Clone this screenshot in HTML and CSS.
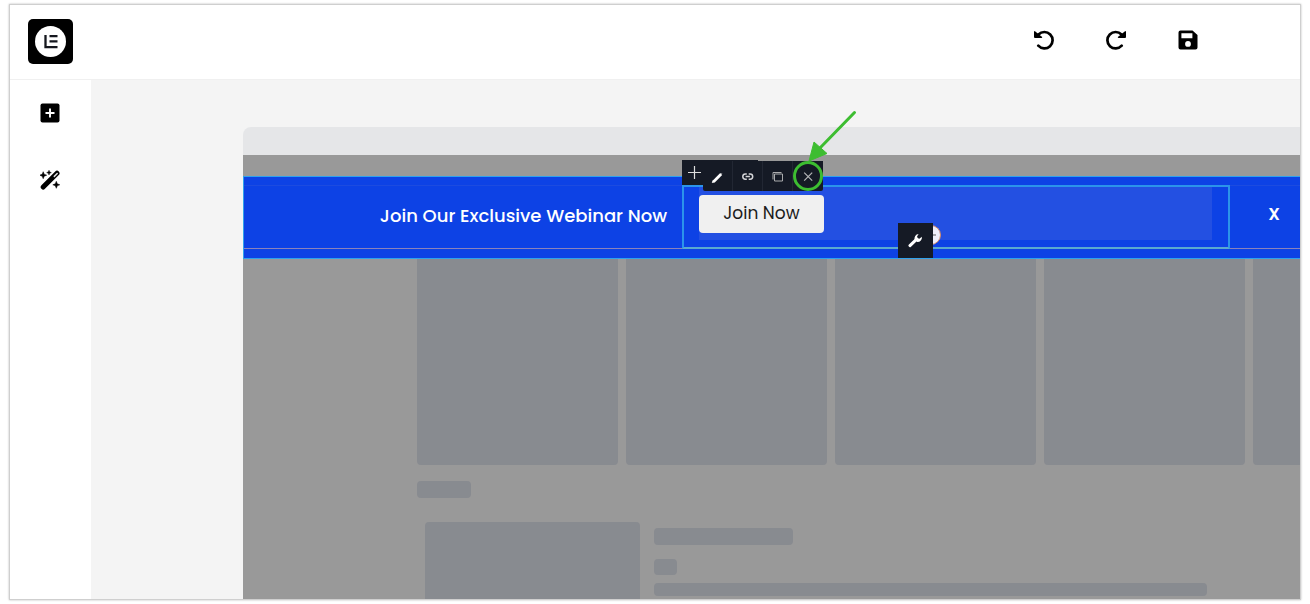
FILE: index.html
```html
<!DOCTYPE html>
<html lang="en">
<head>
<meta charset="utf-8">
<meta name="viewport" content="width=device-width, initial-scale=1">
<title>Webinar bar editor</title>
<link rel="stylesheet" href="styles.css">
</head>
<body>
<div class="app">
  <header class="topbar">
    <button class="logo" type="button" aria-label="Menu">
      <svg viewBox="0 0 45 45" width="45" height="45"><circle cx="22.5" cy="22.5" r="15.5" fill="#fff"/><path d="M17.500 16v12.200h12M21.500 17.200h8M21.500 22.300h8" fill="none" stroke="#15171e" stroke-width="2.300"/></svg>
    </button>
    <div class="actions">
      <button type="button" aria-label="Undo">
        <svg viewBox="0 0 20 20" width="20" height="20"><path d="M4.500 4.500A8.200 8.200 0 1 1 4.300 15.700" fill="none" stroke="#000" stroke-width="2.700" stroke-linecap="round"/><path d="M0 1.500Q.2 .6 1 1.200L8.200 7Q8.300 8 7.500 8H1Q0 8 0 7z"/></svg>
      </button>
      <button type="button" aria-label="Redo">
        <svg viewBox="0 0 20 20" width="20" height="20"><path d="M15.500 4.500A8.200 8.200 0 1 0 15.700 15.700" fill="none" stroke="#000" stroke-width="2.700" stroke-linecap="round"/><path d="M20 1.500Q19.800 .6 19 1.200L11.800 7Q11.700 8 12.500 8H19Q20 8 20 7z"/></svg>
      </button>
      <button type="button" aria-label="Save">
        <svg viewBox="0 0 20 20" width="20" height="20"><path fill-rule="evenodd" d="M3 .5h11.500L19.500 5v12.500a2 2 0 0 1-2 2H2.500a2 2 0 0 1-2-2V2.500a2 2 0 0 1 2-2zM3.400 3.200v5h11v-5zM10 11a2.900 2.900 0 1 0 0 5.800a2.900 2.900 0 0 0 0-5.800z"/></svg>
      </button>
    </div>
  </header>
  <div class="workspace">
    <nav class="sidebar" aria-label="Tools">
      <button type="button" aria-label="Add element">
        <svg viewBox="0 0 20 20" width="20" height="20"><rect x=".5" y=".5" width="19" height="19" rx="2"/><path d="M10 5.500v9M5.500 10h9" stroke="#fff" stroke-width="1.900"/></svg>
      </button>
      <button type="button" aria-label="Magic styling">
        <svg viewBox="0 0 20 20" width="20" height="20"><path d="M3.200 17L17 3.200" stroke="#000" stroke-width="5" stroke-linecap="round"/><path d="M14.300 6.400l2.900-2.900" stroke="#ddd" stroke-width="1.500" stroke-linecap="round"/><path d="M3.200 1.700l1 2.500 2.500 1-2.500 1-1 2.500-1-2.500-2.500-1 2.500-1zM9 .3l.7 1.600 1.600.7-1.600.7L9 4.900l-.7-1.600-1.600-.7 1.600-.7zM16.300 11.300l1 2.500 2.500 1-2.500 1-1 2.500-1-2.500-2.500-1 2.500-1z" stroke="#000" stroke-width=".5"/></svg>
      </button>
    </nav>
    <main class="canvas">
      <div class="browser-bar"></div>
      <div class="page">
        <section class="banner">
          <div class="banner-row">
            <h1 class="banner-title">Join Our Exclusive Webinar Now</h1>
            <div class="column">
              <div class="widget"><button class="cta" type="button">Join Now</button></div>
              <div class="column-tools"><button type="button" aria-label="Add column"><svg viewBox="0 0 25 25" width="25" height="25"><path d="M12.500 6v13M6 12.500h13" stroke="#ddd" stroke-width="1.200"/></svg></button></div>
              <div class="widget-tools">
                <button type="button" aria-label="Edit"><svg viewBox="0 0 30 30" width="30" height="30"><path d="M10.800 20.400l7.400-7.400" stroke="#fff" stroke-width="2.800"/><path d="M9.300 21.600l.8-2.400 1.800 1.700zM18.600 12.600l.6-.6" fill="#fff" stroke="#fff" stroke-width=".8"/></svg></button>
                <button type="button" aria-label="Link"><svg viewBox="0 0 30 30" width="30" height="30"><path d="M13.800 13h-1.400a2.500 2.500 0 0 0 0 5.200h1.400M15.700 13h1.400a2.500 2.500 0 0 1 0 5.200h-1.400M12.600 15.600h4.300" fill="none" stroke="#d5d5d8" stroke-width="1.500"/></svg></button>
                <button type="button" aria-label="Duplicate"><svg viewBox="0 0 30 30" width="30" height="30"><path d="M11.500 13h8v7h-8zM10 18.500v-7h8.500" fill="none" stroke="#aaabad"/></svg></button>
                <button type="button" aria-label="Delete"><svg viewBox="0 0 30 30" width="30" height="30"><path d="M11.200 11.600l8 8M19.200 11.600l-8 8" stroke="#b5b6b8" stroke-width="1.200"/></svg></button>
              </div>
              <button class="add-dot" type="button" aria-label="Add section"><svg viewBox="0 0 18 18" width="18" height="18"><path d="M5 9h9" stroke="#555"/></svg></button>
              <button class="settings" type="button" aria-label="Settings"><svg viewBox="0 0 36 36" width="35" height="35"><path d="M12.300 23.200l7-6.600" stroke="#fff" stroke-width="3.200" stroke-linecap="round"/><path d="M21.200 11.300a4.500 4.500 0 0 0-4 6l2.600 2.300a4.500 4.500 0 0 0 4.700-5.400l-2.500 2-1.900-.5-.5-1.900z" fill="#fff"/></svg></button>
              <svg class="pointer" viewBox="0 0 68 86" width="68" height="86" aria-hidden="true"><circle cx="16" cy="67" r="13.500" fill="none" stroke="#3dbd31" stroke-width="3"/><path d="M62.500 3.500L27 40" stroke="#3dbd31" stroke-width="3" stroke-linecap="round"/><path d="M17 52l5-19 13 11.500z" fill="#3dbd31" stroke="#3dbd31" stroke-linejoin="round"/></svg>
            </div>
            <button class="close" type="button">X</button>
          </div>
        </section>
        <div class="skeleton">
          <div class="tiles"><div class="block tile"></div><div class="block tile"></div><div class="block tile"></div><div class="block tile"></div><div class="block tile"></div></div>
          <div class="block label"></div>
          <div class="feature">
            <div class="block picture"></div>
            <div class="lines"><div class="block line-title"></div><div class="block line-tag"></div><div class="block line-body"></div></div>
          </div>
        </div>
      </div>
    </main>
  </div>
</div>
</body>
</html>
```
FILE: styles.css
```css
* { box-sizing: border-box; }

body {
  margin: 0;
  padding: 4px 9px;
  background: #fff;
  font-family: Poppins, Inter, "Open Sans", sans-serif;
}

button {
  display: block;
  margin: 0;
  padding: 0;
  border: 0;
  background: none;
  font: inherit;
  color: inherit;
}

svg { display: block; }

.app {
  display: flex;
  flex-direction: column;
  height: calc(100vh - 8px);
  border: 1px solid #cfcfcf;
  box-shadow: 0 0 2px #bbb;
  overflow: hidden;
}

.topbar {
  display: flex;
  flex: none;
  align-items: center;
  justify-content: space-between;
  height: 75px;
  padding: 0 102px 2px 18px;
  border-bottom: 1px solid #f0f0f0;
}

.logo {
  border-radius: 5px;
  background: #000;
}

.actions {
  display: flex;
  gap: 52px;
  margin-bottom: 2px;
}

.workspace {
  display: flex;
  flex: 1;
  min-height: 0;
}

.sidebar {
  display: flex;
  flex: none;
  flex-direction: column;
  align-items: center;
  gap: 47px;
  width: 81px;
  padding: 23px 1px 0 0;
}

.canvas {
  display: flex;
  flex: 1;
  flex-direction: column;
  min-width: 0;
  padding: 47px 0 0 152px;
  background: #f4f4f4;
}

.browser-bar {
  flex: none;
  height: 28px;
  border-top-left-radius: 8px;
  background: #e5e6e8;
}

.page {
  flex: 1;
  min-height: 0;
  padding-top: 21px;
  background: #999;
}

.banner {
  position: relative;
  padding: 8px 0 9px;
  border: 1px solid #2fa2ed;
  border-right: 0;
  background: #0d42e5;
  color: #fff;
}

.banner-row {
  display: grid;
  grid-template-columns: 438fr 548fr 70fr;
  border-top: 1px solid #1c4be0;
  border-bottom: 1px solid #8b83bb;
}

.banner-title {
  align-self: center;
  margin: 0;
  padding: 0 15px 2px 0;
  font-size: 18px;
  font-weight: 500;
  line-height: 28px;
  text-align: right;
  white-space: nowrap;
}

.column {
  position: relative;
  margin: -1px 0;
  padding: 0 16px 7px 15px;
  border: 2px solid #2b94ea;
  border-bottom-color: #5aa9cf;
}

.widget {
  padding: 8px 0 7px;
  background: #2350e2;
}

.cta {
  width: 125px;
  padding-bottom: 2px;
  border-radius: 4px;
  background: #f0f0f0;
  color: #1b1b1b;
  font-size: 17px;
  line-height: 36px;
}

.column-tools,
.widget-tools {
  position: absolute;
  display: flex;
  background: #151a25;
}

.column-tools {
  top: -27px;
  left: -2px;
  width: 76px;
}

.widget-tools {
  top: -26px;
  left: 19px;
  border-radius: 0 0 2px 2px;
}

.widget-tools button + button { box-shadow: -1px 0 #222733; }

.add-dot {
  position: absolute;
  top: 38px;
  left: 237px;
  border: 1px solid #d58b68;
  border-radius: 50%;
  background: #eeeefa;
}

.settings {
  position: absolute;
  top: 36px;
  left: 214px;
  background: #151a25;
}

.pointer {
  position: absolute;
  top: -78px;
  left: 108px;
  pointer-events: none;
}

.close {
  align-self: center;
  padding: 0 0 6px 18px;
  font-size: 17px;
  font-weight: 600;
  line-height: 28px;
}

.skeleton {
  padding-left: 174px;
  overflow: hidden;
}

.block {
  flex: none;
  border-radius: 4px;
  background: #888b90;
}

.tiles {
  display: flex;
  gap: 8px;
}

.tile {
  width: 201px;
  height: 206px;
  border-radius: 0 0 4px 4px;
}

.label {
  width: 54px;
  height: 17px;
  margin-top: 16px;
}

.feature {
  display: flex;
  gap: 14px;
  padding: 24px 93px 0 8px;
}

.picture {
  width: 215px;
  height: 160px;
}

.lines {
  flex: 1;
  padding-top: 6px;
}

.line-title {
  width: 139px;
  height: 17px;
}

.line-tag {
  width: 23px;
  height: 16px;
  margin-top: 14px;
}

.line-body {
  height: 13px;
  margin-top: 8px;
}
```
